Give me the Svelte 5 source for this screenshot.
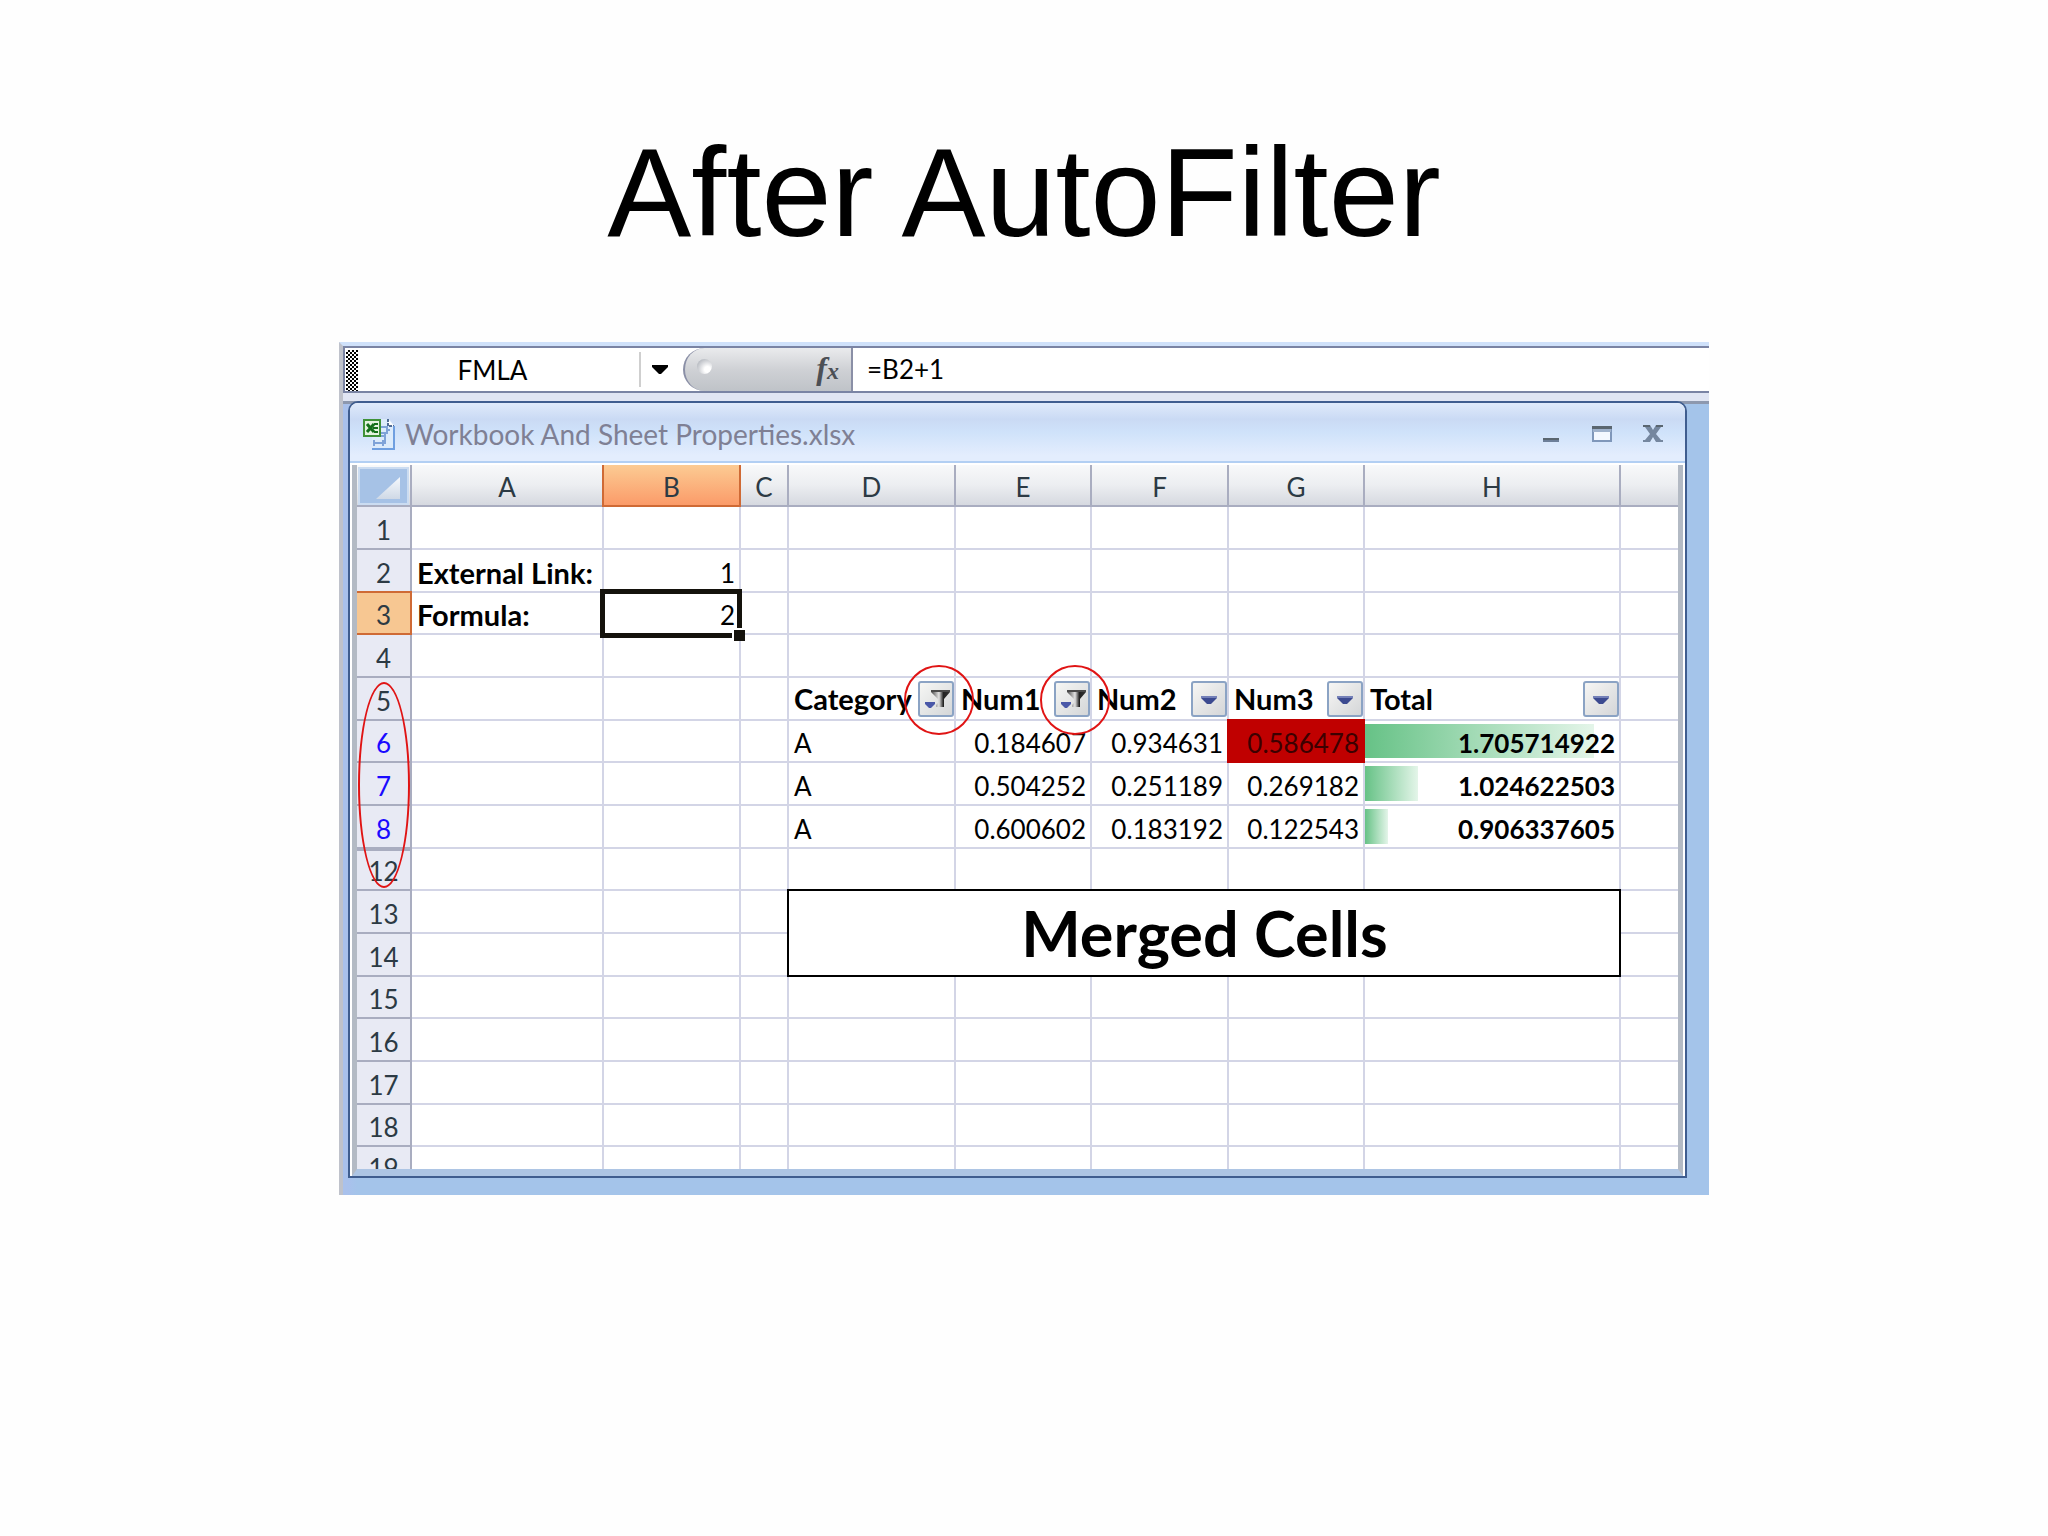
<script>
  const columns = [
    { id: 'A' }, { id: 'B', active: true }, { id: 'C' }, { id: 'D' },
    { id: 'E' }, { id: 'F' }, { id: 'G' }, { id: 'H' }, { id: '' }
  ];
  const letters = ['A', 'B', 'C', 'D', 'E', 'F', 'G', 'H', 'I'];
  const rowNumbers = [1, 2, 3, 4, 5, 6, 7, 8, 12, 13, 14, 15, 16, 17, 18, 19];
  const cells = {
    A2: { text: 'External Link:', title: true },
    B2: { text: '1', right: true },
    A3: { text: 'Formula:', title: true },
    B3: { text: '2', right: true, selected: true },
    D5: { text: 'Category', filter: 'on' },
    E5: { text: 'Num1', filter: 'on' },
    F5: { text: 'Num2', filter: 'off' },
    G5: { text: 'Num3', filter: 'off' },
    H5: { text: 'Total', filter: 'off' },
    D6: { text: 'A' }, E6: { text: '0.184607', right: true }, F6: { text: '0.934631', right: true },
    G6: { text: '0.586478', right: true, alert: true }, H6: { text: '1.705714922', right: true, bold: true, bar: 90 },
    D7: { text: 'A' }, E7: { text: '0.504252', right: true }, F7: { text: '0.251189', right: true },
    G7: { text: '0.269182', right: true }, H7: { text: '1.024622503', right: true, bold: true, bar: 21 },
    D8: { text: 'A' }, E8: { text: '0.600602', right: true }, F8: { text: '0.183192', right: true },
    G8: { text: '0.122543', right: true }, H8: { text: '0.906337605', right: true, bold: true, bar: 9 },
    D13: { text: 'Merged Cells', merged: true }
  };
  const covered = (row, letter) =>
    (row === 13 && 'EFGH'.includes(letter)) || (row === 14 && 'DEFGH'.includes(letter));
  let nameBox = $state('FMLA');
  let formula = $state('=B2+1');
</script>

<main>
  <h1>After AutoFilter</h1>

  <section class="app">
    <div class="formula-bar">
      <span class="grip"></span>
      <input class="name" aria-label="Name box" bind:value={nameBox} />
      <button class="drop" aria-label="Show names">
        <svg width="16" height="10" viewBox="0 0 16 10"><path d="M0 0H16V2L9 9H7L0 2Z" fill="#000" /></svg>
      </button>
      <div class="capsule">
        <span class="knob"></span>
        <button class="fx" aria-label="Insert function"><i>f</i><i class="x">x</i></button>
      </div>
      <input class="formula" aria-label="Formula" bind:value={formula} />
    </div>

    <div class="workspace">
      <div class="window">
        <header>
          <svg class="book" width="32" height="32" viewBox="0 0 32 32">
            <path d="M9 1H26L31 7V31H9Z" fill="#dcebfb" />
            <path d="M25 1V8H31" fill="#fff" stroke="#1d3f73" stroke-width="1.5" stroke-dasharray="3 1" />
            <path d="M31 8V31H9" fill="none" stroke="#6f9fe0" stroke-width="2" />
            <path d="M17 9H24V15H17M22 15V18H17M24 12H27M11 22V28M11 25H20M20 22V28M20 25H22V18" fill="none" stroke="#7fa3d8" stroke-width="2" />
            <rect x="1" y="2" width="16" height="16" fill="#e4f3df" stroke="#3f9238" stroke-width="2" />
            <path d="M4 6L11 14M11 6L4 14" stroke="#14701a" stroke-width="3" />
            <path d="M11 6H15M10 10H15M11 14H15" stroke="#14701a" stroke-width="2" />
          </svg>
          <h2>Workbook And Sheet Properties.xlsx</h2>
          <div class="controls">
            <button aria-label="Minimize"><svg width="20" height="20" viewBox="0 0 20 20"><path d="M2 14H18V18H2Z" fill="#6d7f99" /><path d="M2 14H18V16H2Z" fill="#5a6670" /></svg></button>
            <button aria-label="Maximize"><svg width="20" height="20" viewBox="0 0 20 20"><rect x="1" y="4" width="18" height="13" fill="#f3f8ff" stroke="#7f97ba" stroke-width="2" /><path d="M0 2H20V5H0Z" fill="#5a6670" /><path d="M1 5H19V8H1Z" fill="#9fb2cc" /></svg></button>
            <button aria-label="Close"><svg width="20" height="20" viewBox="0 0 20 20"><path d="M0 1H7L10 6L13 1H20V3H18L13 10L18 16H20V18H13L10 13L7 18H0V16H2L7 10L2 3H0Z" fill="#75879f" /><path d="M0 1H7V3H0ZM13 1H20V3H13Z" fill="#5a6670" /></svg></button>
          </div>
        </header>

        <div class="sheet">
          <table>
            <colgroup>
              <col class="w-head" /><col class="w-a" /><col class="w-num" /><col class="w-c" /><col class="w-d" />
              <col class="w-e" /><col class="w-num" /><col class="w-e" /><col class="w-h" /><col />
            </colgroup>
            <thead>
              <tr>
                <th class="corner" aria-label="Select all">
                  <svg viewBox="0 0 53 40" preserveAspectRatio="none"><defs><linearGradient id="tri" x1="0" y1="0" x2="0" y2="1"><stop offset="0" stop-color="#f6f9fd" /><stop offset="1" stop-color="#cfd9e6" /></linearGradient></defs>
                    <rect x="2" y="3" width="49" height="36" fill="#a6c2e6" stroke="#cbdcf1" stroke-width="2" /><path d="M43 12V34H19Z" fill="url(#tri)" /></svg>
                </th>
                {#each columns as column}
                  <th scope="col" class:active={column.active}>{column.id}</th>
                {/each}
              </tr>
            </thead>
            <tbody>
              {#each rowNumbers as row}
                <tr class:hidden-below={row === 8} class:cut={row === 19}>
                  <th scope="row" class:filtered={row >= 6 && row <= 8} class:active={row === 3}>
                    <div class="label">{row}</div>
                    {#if row === 5}<span class="mark-rows"></span>{/if}
                  </th>
                  {#each letters as letter}
                    {#if !covered(row, letter)}
                      {@const cell = cells[letter + row]}
                      <td
                        class:bold={cell?.bold}
                        class:title={cell?.title}
                        class:right={cell?.right}
                        class:alert={cell?.alert}
                        class:merged={cell?.merged}
                        class:last={letter === 'I'}
                        colspan={cell?.merged ? 5 : 1}
                        rowspan={cell?.merged ? 2 : 1}
                      >
                        {#if cell?.filter}
                          <div class="field">
                            <span>{cell.text}</span>
                            <button class="filter" aria-label={'Filter ' + cell.text}>
                              {#if cell.filter === 'on'}
                                <svg width="32" height="32" viewBox="0 0 32 32"><defs><linearGradient id="fun"><stop offset="0" stop-color="#444" /><stop offset=".42" stop-color="#e4e4e4" /><stop offset=".65" stop-color="#222" /><stop offset="1" stop-color="#333" /></linearGradient></defs>
                                  <path d="M5 19H15V21L11 25H9L5 21Z" fill="#4a58a8" /><path d="M11 7H30V9L24 16V24H16V22L18 20V16L11 9Z" fill="url(#fun)" /><path d="M11 7H30V9H11Z" fill="#4a4a4a" /></svg>
                              {:else}
                                <svg width="32" height="32" viewBox="0 0 32 32"><path d="M8 13H24V15L18 21H14L8 15Z" fill="#3c4a90" /><path d="M8 13H24V15H8Z" fill="#7480b8" /></svg>
                              {/if}
                            </button>
                          </div>
                          {#if cell.filter === 'on'}<span class="mark-filter"></span>{/if}
                        {:else if cell}
                          {#if cell.bar}<span class="bar" style:width={cell.bar + '%'}></span>{/if}
                          <div class="value">{cell.text}</div>
                          {#if cell.selected}<span class="cursor"></span><span class="handle"></span>{/if}
                        {/if}
                      </td>
                    {/if}
                  {/each}
                </tr>
              {/each}
            </tbody>
          </table>
        </div>
      </div>
    </div>
  </section>
</main>

<style>
  :global(body) { margin: 0; background: #fefefe; }
  main { padding: 121px 24px; font-family: Lato, "Open Sans", sans-serif; font-size: 26px; color: #000; }
  h1 { margin: 0 0 77px; font: 400 126px/144px "Liberation Sans", Arial, sans-serif; text-align: center; }
  button, input { font: inherit; color: inherit; border: 0; padding: 0; background: none; min-width: 0; }
  button svg { display: block; }
  * { box-sizing: border-box; }

  .app { max-width: 1370px; margin: 0 auto; border-left: 4px solid #bfc2cb; border-top: 4px solid #cfe1fa; background: #a4c4ea; }
  .formula-bar { display: flex; align-items: stretch; height: 47px; background: #fff; border: 2px solid #7a84a4; border-right: 0; }
  .grip { width: 12px; margin: 2px 0 0 1px; background: repeating-conic-gradient(#000 0 25%, #fff 0 50%) 0 0 / 4px 4px; }
  .name { width: 283px; margin: 4px 0; padding-right: 12px; text-align: center; border-right: 2px solid #cfcfcf; }
  .drop { width: 42px; display: grid; place-items: center; padding-right: 4px; }
  .capsule { width: 170px; display: flex; align-items: center; justify-content: space-between; padding: 0 12px; border: 2px solid #8a8fa6; border-width: 0 2px; border-radius: 22px 0 0 22px; background: linear-gradient(#eaebed, #cfd1d5 50%, #bfc3c8); }
  .knob { width: 15px; height: 15px; border-radius: 50%; background: radial-gradient(circle at 70% 70%, #fff 20%, #a9adb5 90%); margin-bottom: 6px; }
  .fx { font: italic 700 32px/36px "Liberation Serif", serif; color: #4c4f55; }
  .fx .x { font-size: 24px; }
  .formula { flex: 1; padding: 0 0 2px 14px; }

  .workspace { border-top: 8px solid #e0e5f3; padding: 0 22px 17px 5px; background: linear-gradient(90deg, #a9c1ec 5px, #a4c4ea 14px); box-shadow: inset 0 3px #8d98ae; }
  .window { border: 2px solid #3f5d8f; border-radius: 10px 10px 0 0; background: #fff; overflow: hidden; }
  header { display: flex; align-items: center; height: 60px; padding: 4px 22px 0 13px; border-bottom: 2px solid #b2cff3; background: linear-gradient(#dfeafb, #cadaf4 28%, #cfe2fa 50%, #e3edfd 90%); }
  h2 { margin: 0 auto 0 10px; font-size: 28px; font-weight: 400; line-height: 40px; color: #7f8094; }
  .controls { display: flex; gap: 31px; }

  .sheet { margin: 2px 2px 0; border: 5px solid #b3bac4; border-top: 0; border-bottom: 7px solid #adc5e4; }
  table { width: 100%; table-layout: fixed; border-collapse: separate; border-spacing: 0; line-height: 36px; }
  .w-head { width: 55px; } .w-a { width: 192px; } .w-num { width: 137px; } .w-c { width: 48px; }
  .w-d { width: 167px; } .w-e { width: 136px; } .w-h { width: 256px; }
  th, td { position: relative; height: 43px; padding: 0; border: 2px solid #d3d5e6; border-width: 0 2px 2px 0; font-weight: 400; text-align: left; vertical-align: bottom; white-space: nowrap; }
  tbody tr:nth-child(3n) > * { height: 42px; }
  th { text-align: center; color: #2c3a44; border-color: #a9adc0; background: #e8eaf4; }
  thead th { height: 42px; background: linear-gradient(#f8f9fa, #eceef1 50%, #d6d9e0); }
  thead th:last-child, .last { border-right: 0; }
  thead th.active { border-color: #cf6a35; background: linear-gradient(#fccb93, #fb9b69); box-shadow: -2px 0 #cf6a35; z-index: 1; }
  tbody th.active { border-color: #cf6a35; background: #f7c792; box-shadow: 0 -2px #cf6a35; }
  .corner svg { display: block; width: 100%; height: 40px; }
  .filtered { color: #1a0aff; }
  .hidden-below th { box-shadow: 0 2px #a9adc0; z-index: 1; }
  .cut > *, tbody .cut > * { height: 22px; border-bottom: 0; }
  .cut .label { height: 22px; line-height: 43px; overflow: hidden; }
  .value { position: relative; padding: 0 4px 0 5px; }
  .right { text-align: right; }
  .bold { font-weight: 700; }
  .title, .field { font-size: 29px; font-weight: 700; }
  .alert { background: #c00000; border-color: #c00000; box-shadow: -2px -2px #c00000, 0 -2px #c00000, -2px 0 #c00000; color: #3c0000; }
  .bar { position: absolute; left: 0; top: 3px; bottom: 3px; background: linear-gradient(90deg, #66c286, #e4f5e9); }
  .field { display: flex; align-items: center; justify-content: space-between; padding: 0 0 2px 5px; }
  .filter { display: grid; place-items: center; width: 36px; height: 36px; border: 2px solid #8ba3c4; border-radius: 3px; background: linear-gradient(135deg, #f6f6f4, #d4d6d8); }
  .merged { font-size: 63px; font-weight: 700; line-height: 84px; text-align: center; z-index: 1; }
  .merged::after { content: ""; position: absolute; inset: -2px; border: 2px solid #000; }
  .cursor { position: absolute; inset: -4px -3px -5px -4px; border: 5px solid #14120c; z-index: 2; }
  .handle { position: absolute; right: -6px; bottom: -8px; width: 13px; height: 13px; border: 2px solid #fff; border-width: 2px 0 0 2px; background: #14120c; z-index: 3; }
  .mark-filter { position: absolute; right: -20px; top: -13px; width: 70px; height: 70px; border: 2px solid #e01414; border-radius: 50%; z-index: 4; pointer-events: none; }
  .mark-rows { position: absolute; left: 1px; top: 4px; width: 52px; height: 206px; border: 2px solid #e01414; border-radius: 50%; z-index: 4; pointer-events: none; }
  tbody tr:nth-child(5) th { z-index: 5; }
</style>
